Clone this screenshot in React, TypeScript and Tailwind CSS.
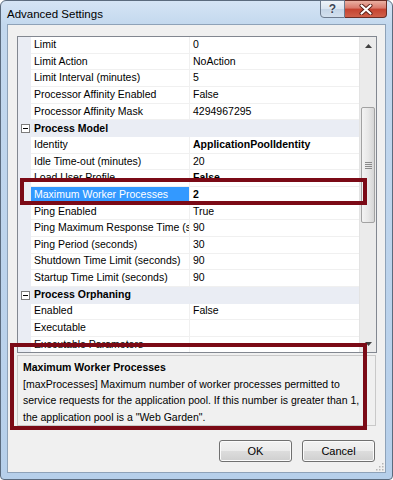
import React from 'react';

type Row = { label: string; value?: string; bold?: boolean; cat?: boolean; selected?: boolean };

const rows: Row[] = [
  { label: 'Limit', value: '0' },
  { label: 'Limit Action', value: 'NoAction' },
  { label: 'Limit Interval (minutes)', value: '5' },
  { label: 'Processor Affinity Enabled', value: 'False' },
  { label: 'Processor Affinity Mask', value: '4294967295' },
  { label: 'Process Model', cat: true },
  { label: 'Identity', value: 'ApplicationPoolIdentity', bold: true },
  { label: 'Idle Time-out (minutes)', value: '20' },
  { label: 'Load User Profile', value: 'False', bold: true },
  { label: 'Maximum Worker Processes', value: '2', bold: true, selected: true },
  { label: 'Ping Enabled', value: 'True' },
  { label: 'Ping Maximum Response Time (seconds)', value: '90' },
  { label: 'Ping Period (seconds)', value: '30' },
  { label: 'Shutdown Time Limit (seconds)', value: '90' },
  { label: 'Startup Time Limit (seconds)', value: '90' },
  { label: 'Process Orphaning', cat: true },
  { label: 'Enabled', value: 'False' },
  { label: 'Executable', value: '' },
  { label: 'Executable Parameters', value: '' },
];

const GridRow: React.FC<{ row: Row }> = ({ row }) => {
  if (row.cat) {
    return (
      <div className="flex h-[16.66px] shrink-0 items-center bg-[#eaedf4]">
        <div className="flex w-[13px] shrink-0 justify-center pl-[1px]">
          <div className="flex h-[9px] w-[9px] items-center justify-center border border-[#7c7c7c] bg-white">
            <div className="h-[1px] w-[5px] bg-black" />
          </div>
        </div>
        <span className="pl-[3px] font-bold">{row.label}</span>
      </div>
    );
  }
  return (
    <div className="flex h-[16.66px] shrink-0">
      <div className="w-[13px] shrink-0 bg-[#eaedf4]" />
      <div
        className={
          row.selected
            ? 'flex w-[159px] shrink-0 items-center overflow-hidden whitespace-nowrap border-b border-r border-[#f0f0f0] bg-[#3399ff] pl-[3px] text-white'
            : 'flex w-[159px] shrink-0 items-center overflow-hidden whitespace-nowrap border-b border-r border-[#f0f0f0] bg-white pl-[3px]'
        }
      >
        {row.label}
      </div>
      <div
        className={
          row.bold
            ? 'flex flex-1 items-center overflow-hidden whitespace-nowrap border-b border-[#f0f0f0] bg-white pl-[3px] font-bold'
            : 'flex flex-1 items-center overflow-hidden whitespace-nowrap border-b border-[#f0f0f0] bg-white pl-[3px]'
        }
      >
        {row.value}
      </div>
    </div>
  );
};

const ScrollBar = () => (
  <div className="flex w-[17px] shrink-0 flex-col bg-[#ebebeb] border-l border-[#e3e3e3]">
    <div className="flex h-[17px] shrink-0 items-center justify-center">
      <svg width="7" height="4" viewBox="0 0 7 4">
        <path d="M0 4 L3.5 0 L7 4 Z" fill="#404040" />
      </svg>
    </div>
    <div className="h-[53px] shrink-0" />
    <div className="mx-[1px] flex h-[116px] shrink-0 items-center justify-center rounded-[2px] border border-[#a2a2a2] bg-[linear-gradient(90deg,#f3f3f3_0%,#e8e8e8_50%,#d6d6d6_100%)]">
      <div className="flex flex-col gap-[1px]">
        <div className="h-[1px] w-[7px] bg-[#8a8a8a]" />
        <div className="h-[1px] w-[7px] bg-[#8a8a8a]" />
        <div className="h-[1px] w-[7px] bg-[#8a8a8a]" />
        <div className="h-[1px] w-[7px] bg-[#8a8a8a]" />
      </div>
    </div>
    <div className="flex-1" />
    <div className="flex h-[17px] shrink-0 items-center justify-center">
      <svg width="7" height="4" viewBox="0 0 7 4">
        <path d="M0 0 L3.5 4 L7 0 Z" fill="#404040" />
      </svg>
    </div>
  </div>
);

const DialogButton: React.FC<{ label: string }> = ({ label }) => (
  <button className="flex h-[22px] w-[73px] items-center justify-center rounded-[3px] border border-[#707070] bg-[linear-gradient(180deg,#f2f2f2_0%,#ebebeb_50%,#dddddd_50%,#cfcfcf_100%)] text-[11px] text-black shadow-[inset_0_0_0_1px_#fbfbfb]">
    {label}
  </button>
);

export default function App() {
  return (
    <div className="relative h-[480px] w-[393px] overflow-hidden font-['Liberation_Sans',Arial,sans-serif] text-[10.5px] text-black">
      <div className="flex h-full w-full flex-col rounded-t-[6px] rounded-b-[4px] border border-[#5b6b7e] bg-[linear-gradient(180deg,#d5e4f5_0%,#c3d8ee_24px,#b6cfea_100%)]">
        {/* title bar */}
        <div className="flex h-[23px] shrink-0 items-start">
          <div className="pl-[6px] pt-[6px] text-[11.5px] leading-[14px] text-black">Advanced Settings</div>
          <div className="ml-auto mr-[5px] flex h-[18px] -mt-[1px]">
            <div className="flex w-[25px] items-center justify-center rounded-bl-[4px] border border-[#6d7b8e] bg-[linear-gradient(180deg,#eef3f9_0%,#d9e4f0_50%,#c4d4e6_50%,#d3e0ee_100%)] text-[12px] font-bold leading-none text-[#3c4656] [text-shadow:0_0_2px_#ffffff]">
              ?
            </div>
            <div className="flex w-[42px] items-center justify-center rounded-br-[4px] border border-l-0 border-[#6a2c24] bg-[linear-gradient(180deg,#eab0a2_0%,#d9786a_45%,#c5422f_50%,#d0604a_100%)]">
              <svg width="14" height="11" viewBox="0 0 14 11">
                <path d="M2.5 1.5 L11.5 9.5 M11.5 1.5 L2.5 9.5" stroke="#5a1d15" strokeWidth="4" strokeLinecap="round" />
                <path d="M2.5 1.5 L11.5 9.5 M11.5 1.5 L2.5 9.5" stroke="#ffffff" strokeWidth="2.2" strokeLinecap="round" />
              </svg>
            </div>
          </div>
        </div>

        {/* client area */}
        <div className="ml-[6px] flex h-[449px] w-[379px] shrink-0 flex-col border border-[#8ea2b8] bg-[#f0f0f0]">
          <div className="ml-[9px] mt-[11px] flex h-[317px] w-[360px] shrink-0 overflow-hidden border border-[#828790] bg-white">
            <div className="flex flex-1 flex-col overflow-hidden">
              {rows.map((r, i) => (
                <GridRow key={i} row={r} />
              ))}
            </div>
            <ScrollBar />
          </div>

          <div className="ml-[9px] mt-[2px] h-[71px] w-[359px] shrink-0 border border-[#c9c9c9] bg-[#f0f0f0] px-[5px] pt-[3px] leading-[16.5px]">
            <div className="font-bold">Maximum Worker Processes</div>
            <div>
              [maxProcesses] Maximum number of worker processes permitted to service requests for the application pool. If this number is greater than 1, the application pool is a "Web Garden".
            </div>
          </div>

          <div className="mt-[14px] flex shrink-0 justify-end gap-[10px] pr-[10px]">
            <DialogButton label="OK" />
            <DialogButton label="Cancel" />
          </div>
          <div className="mt-auto flex justify-end pb-[1px] pr-[1px]">
            <svg width="8" height="8" viewBox="0 0 8 8">
              <rect x="6" y="0" width="1.5" height="1.5" fill="#b5b5b5" />
              <rect x="3" y="3" width="1.5" height="1.5" fill="#b5b5b5" />
              <rect x="6" y="3" width="1.5" height="1.5" fill="#b5b5b5" />
              <rect x="0" y="6" width="1.5" height="1.5" fill="#b5b5b5" />
              <rect x="3" y="6" width="1.5" height="1.5" fill="#b5b5b5" />
              <rect x="6" y="6" width="1.5" height="1.5" fill="#b5b5b5" />
            </svg>
          </div>
        </div>
      </div>

      {/* annotation boxes */}
      <div className="pointer-events-none absolute left-[20px] top-[178px] h-[27px] w-[347px] border-[4px] border-[#7b0a16]" />
      <div className="pointer-events-none absolute left-[10px] top-[343px] h-[87px] w-[357px] border-[4px] border-[#7b0a16]" />
    </div>
  );
}
